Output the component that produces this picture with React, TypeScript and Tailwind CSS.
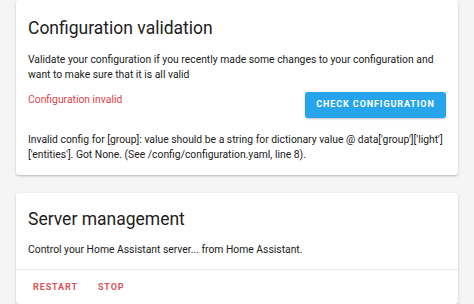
export default function App() {
  return (
    <div
      className="w-[474px] h-[304px] overflow-hidden bg-[#f5f5f5] px-4 flex flex-col gap-[18px] text-[#212121]"
      style={{ fontFamily: 'Roboto, "Liberation Sans", sans-serif' }}
    >
      {/* Configuration validation card */}
      <div className="shrink-0 bg-white rounded-[3px] shadow-[0_1px_3px_rgba(0,0,0,0.18),0_1px_1px_rgba(0,0,0,0.08)] px-3 pt-4 pb-[13px]">
        <h1 className="text-[17.5px] leading-[24px] font-normal">Configuration validation</h1>
        <p className="mt-[13px] text-[10.35px] leading-[14.5px]">
          Validate your configuration if you recently made some changes to your configuration and
          want to make sure that it is all valid
        </p>
        <div className="mt-[10px] flex items-start justify-between">
          <span className="mt-px text-[10.35px] leading-[14.5px] text-[#de4446]">Configuration invalid</span>
          <button className="w-[141px] h-[26px] rounded-[3px] bg-[#27a5ec] text-white text-[9px] font-bold tracking-[0.9px] shadow-[0_1px_2px_rgba(0,0,0,0.25)]">
            CHECK CONFIGURATION
          </button>
        </div>
        <p className="mt-[14px] text-[10.35px] leading-[15px]">
          Invalid config for [group]: value should be a string for dictionary value @ data['group']['light']
          ['entities']. Got None. (See /config/configuration.yaml, line 8).
        </p>
      </div>

      {/* Server management card */}
      <div className="flex-1 bg-white rounded-[3px] shadow-[0_1px_3px_rgba(0,0,0,0.18),0_1px_1px_rgba(0,0,0,0.08)]">
        <div className="px-3 pt-[14px] pb-[11px] border-b border-[#e8e8e8]">
          <h2 className="text-[17.5px] leading-[24px] font-normal">Server management</h2>
          <p className="mt-[12px] text-[10.35px] leading-[14.5px]">
            Control your Home Assistant server... from Home Assistant.
          </p>
        </div>
        <div className="flex gap-[20px] pl-[17px] pt-[11px]">
          <button className="text-[9px] font-bold tracking-[0.9px] text-[#e0525a]">RESTART</button>
          <button className="text-[9px] font-bold tracking-[0.9px] text-[#e0525a]">STOP</button>
        </div>
      </div>
    </div>
  )
}
